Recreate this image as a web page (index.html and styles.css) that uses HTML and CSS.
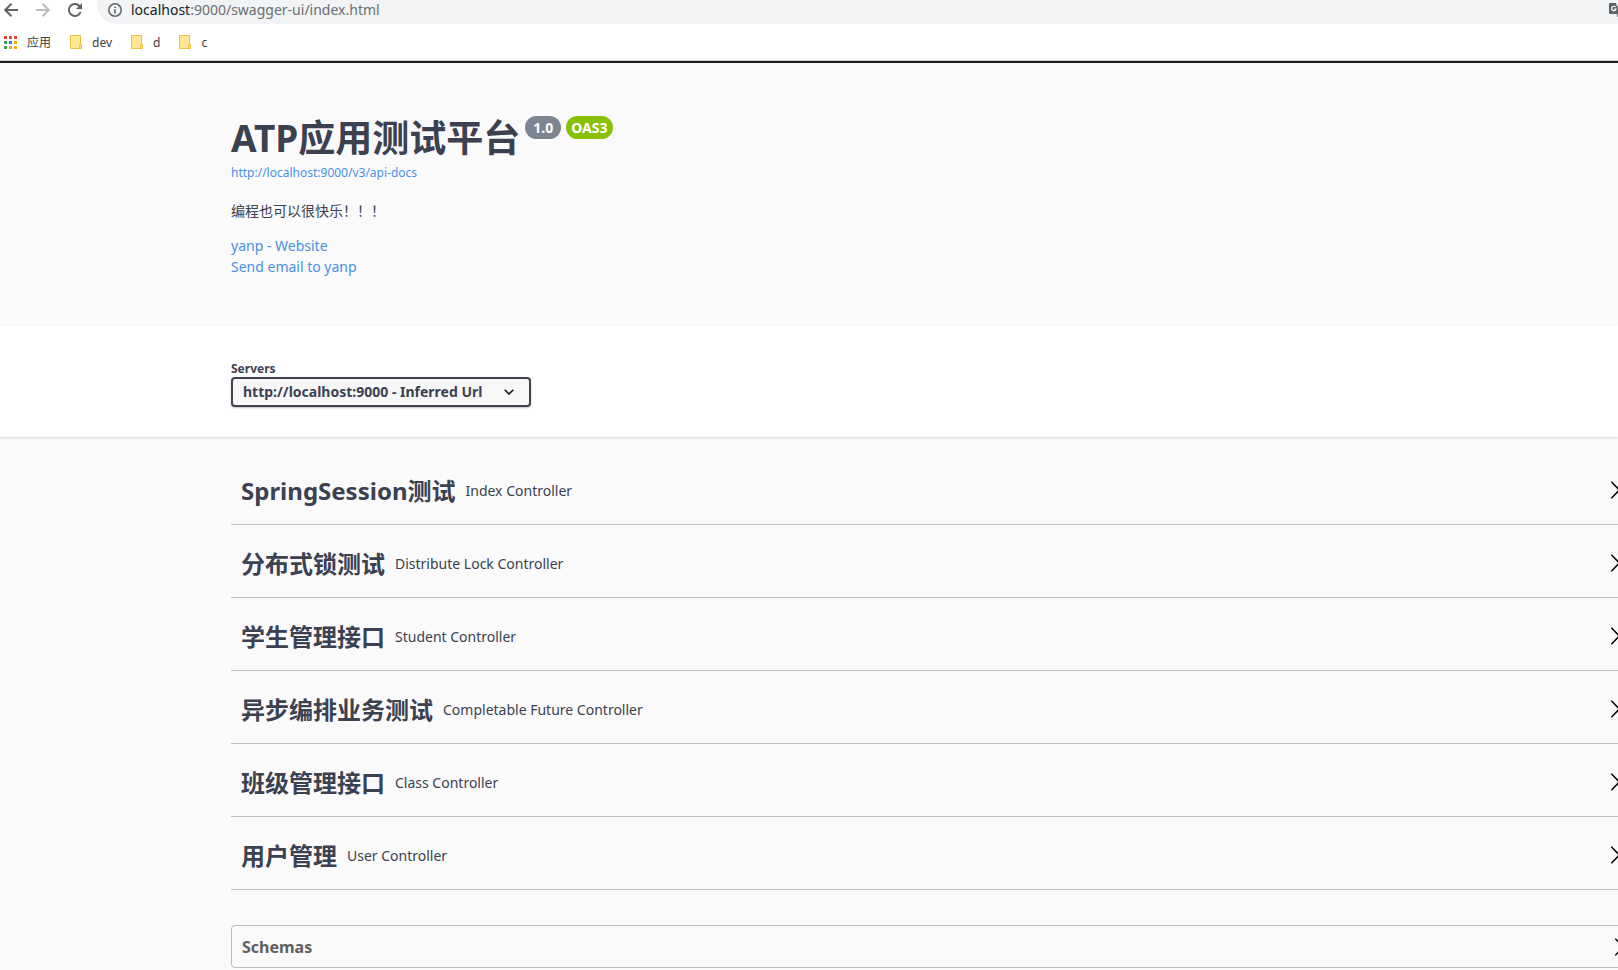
FILE: index.html
```html
<!DOCTYPE html>
<html lang="zh-CN">
<head>
  <meta charset="UTF-8">
  <meta name="viewport" content="width=device-width, initial-scale=1.0">
  <title>Swagger UI</title>
  <link rel="stylesheet" href="styles.css">
</head>
<body>
  <svg width="0" height="0" class="defs">
    <symbol id="large-arrow" viewBox="0 0 20 20">
      <path d="M13.25 10L6.109 2.58c-.268-.27-.268-.707 0-.979.268-.27.701-.27.969 0l7.83 7.908c.268.271.268.709 0 .979l-7.83 7.908c-.268.271-.701.27-.969 0-.268-.269-.268-.707 0-.979L13.25 10z"/>
    </symbol>
    <symbol id="folder" viewBox="0 0 12 14">
      <path d="M.5.5h10v9h1v4H.5z" fill="#ffe693" stroke="#e9c343"/>
      <path d="M9.5 13V9.500h2" fill="none" stroke="#e9c343"/>
    </symbol>
  </svg>

  <!-- Browser bar -->
  <header class="browser">
    <div class="toolbar">
      <button class="nav-btn" aria-label="Back">
        <svg width="14" height="14" viewBox="0 0 14 14"><path d="M14 7H1.500M7.500 .7L1.200 7l6.300 6.300" fill="none" stroke="#5f6368" stroke-width="2"/></svg>
      </button>
      <button class="nav-btn" aria-label="Forward">
        <svg width="14" height="14" viewBox="0 0 14 14"><path d="M0 7h12.500M6.500 .7L12.800 7l-6.300 6.300" fill="none" stroke="#bbbdbf" stroke-width="2"/></svg>
      </button>
      <button class="nav-btn" aria-label="Reload">
        <svg width="14" height="14" viewBox="0 0 14 14"><path d="M12.600 9A6 6 0 1 1 11.400 2.900L13 4.500" fill="none" stroke="#5f6368" stroke-width="2"/><path d="M14 0v6H8z" fill="#5f6368"/></svg>
      </button>
      <div class="address">
        <svg width="14" height="14" viewBox="0 0 14 14"><circle cx="7" cy="7" r="6.200" fill="none" stroke="#5f6368" stroke-width="1.500"/><path d="M6.200 3.500h1.600v1.600H6.200zM6.200 6.200h1.600v4.300H6.200z" fill="#5f6368"/></svg>
        <span class="url"><b>localhost</b>:9000/swagger-ui/index.html</span>
        <svg class="translate" width="16" height="14" viewBox="0 0 16 14"><path d="M7 3h9v11H8z" fill="#8a8d91"/><path d="M1 0h6l3 11H1a1 1 0 0 1-1-1V1a1 1 0 0 1 1-1z" fill="#5f6368"/><path d="M6.500 4A2.200 2.200 0 1 0 7 6H5" fill="none" stroke="#fff" stroke-width="1.200"/><path d="M9 5h6M12 4v1M14 5c-1 3-2 4-4 5" fill="none" stroke="#fff"/></svg>
      </div>
    </div>
    <nav class="bookmarks">
      <a href="#">
        <svg width="13" height="13" viewBox="0 0 13 13">
          <path d="M0 0h3v3H0zM5 0h3v3H5zM10 0h3v3h-3z" fill="#ea4335"/>
          <path d="M0 5h3v3H0zM0 10h3v3H0z" fill="#34a05a"/>
          <path d="M5 5h3v3H5z" fill="#1a82f7"/>
          <path d="M10 5h3v3h-3zM5 10h3v3H5zM10 10h3v3h-3z" fill="#f9ab00"/>
        </svg>
        应用
      </a>
      <a href="#"><svg width="12" height="14"><use href="#folder"/></svg>dev</a>
      <a href="#"><svg width="12" height="14"><use href="#folder"/></svg>d</a>
      <a href="#"><svg width="12" height="14"><use href="#folder"/></svg>c</a>
    </nav>
  </header>

  <main class="swagger-ui">
    <section class="info wrapper">
      <h1 class="title">ATP应用测试平台
        <span class="badges"><small class="version">1.0</small><small class="version oas">OAS3</small></span>
      </h1>
      <a class="docs-link" href="#">http://localhost:9000/v3/api-docs</a>
      <p class="description">编程也可以很快乐！！！</p>
      <div class="contact">
        <a href="#">yanp - Website</a>
        <a href="#">Send email to yanp</a>
      </div>
    </section>

    <section class="scheme-container">
      <div class="wrapper">
        <label for="servers">Servers</label>
        <div class="select-box">
          <select id="servers">
            <option>http://localhost:9000 - Inferred Url</option>
          </select>
          <svg width="10" height="6" viewBox="0 0 10 6"><path d="M.7.7L5 5 9.300.7" fill="none" stroke="#111" stroke-width="1.600"/></svg>
        </div>
      </div>
    </section>

    <section class="wrapper wide">
      <div class="tag">
        <h3>SpringSession测试</h3><small>Index Controller</small>
        <button aria-label="Expand"><svg width="20" height="20"><use href="#large-arrow"/></svg></button>
      </div>
      <div class="tag">
        <h3>分布式锁测试</h3><small>Distribute Lock Controller</small>
        <button aria-label="Expand"><svg width="20" height="20"><use href="#large-arrow"/></svg></button>
      </div>
      <div class="tag">
        <h3>学生管理接口</h3><small>Student Controller</small>
        <button aria-label="Expand"><svg width="20" height="20"><use href="#large-arrow"/></svg></button>
      </div>
      <div class="tag">
        <h3>异步编排业务测试</h3><small>Completable Future Controller</small>
        <button aria-label="Expand"><svg width="20" height="20"><use href="#large-arrow"/></svg></button>
      </div>
      <div class="tag">
        <h3>班级管理接口</h3><small>Class Controller</small>
        <button aria-label="Expand"><svg width="20" height="20"><use href="#large-arrow"/></svg></button>
      </div>
      <div class="tag">
        <h3>用户管理</h3><small>User Controller</small>
        <button aria-label="Expand"><svg width="20" height="20"><use href="#large-arrow"/></svg></button>
      </div>

      <div class="models">
        <h4>Schemas</h4>
        <button aria-label="Expand schemas"><svg width="20" height="20"><use href="#large-arrow"/></svg></button>
      </div>
    </section>
  </main>
</body>
</html>
```

FILE: styles.css
```css
* {
  box-sizing: border-box;
}
body {
  margin: 0;
  background: #fafafa;
  color: #3b4151;
  font-family: "Noto Sans", "Noto Sans CJK SC", sans-serif;
  font-size: 14px;
  overflow-x: hidden;
}
.defs {
  position: absolute;
}
h1, h3, h4, p {
  margin: 0;
}
a {
  color: #4990e2;
  text-decoration: none;
}
button {
  padding: 0;
  border: none;
  background: none;
  cursor: pointer;
}
svg {
  display: block;
  flex: none;
}

/* browser bar */
.browser {
  background: #fff;
  border-bottom: 1px solid #d0d0d0;
}
.toolbar {
  display: flex;
  height: 24px;
  padding-left: 4px;
}
.nav-btn {
  width: 32px;
  padding-bottom: 4px;
}
.address {
  flex: 1;
  display: flex;
  align-items: center;
  gap: 9px;
  padding: 0 0 4px 11px;
  margin-left: -3px;
  background: #f1f3f4;
  border-radius: 0 0 0 20px;
  overflow: hidden;
}
.url {
  flex: 1;
  font-size: 14px;
  line-height: 20px;
  color: #6b6f73;
}
.url b {
  font-weight: normal;
  color: #202124;
}
.translate {
  margin-right: -7px;
}
.bookmarks {
  display: flex;
  gap: 19px;
  height: 36px;
  padding-left: 4px;
}
.bookmarks a {
  display: flex;
  align-items: center;
  gap: 10px;
  color: #3c4043;
  font-size: 12px;
}

/* swagger */
.swagger-ui {
  border-top: 2px solid #1b1b1b;
}
.wrapper {
  padding-left: 231px;
}
.info {
  height: 263px;
  padding-top: 50px;
}
.title {
  display: flex;
  gap: 5px;
  font-size: 37px;
  line-height: 50px;
}
.badges {
  display: flex;
  gap: 5px;
  padding-top: 3px;
}
.version {
  height: 23px;
  padding: 0 8px;
  border-radius: 12px;
  background: #7d8492;
  color: #fff;
  font-size: 14px;
  line-height: 23px;
}
.version.oas {
  padding: 0 5px;
  background: #89bf04;
}
.docs-link {
  display: block;
  font-size: 12px;
  line-height: 20px;
}
.description {
  margin: 18px 0 14px;
  line-height: 20px;
}
.contact a {
  display: block;
  line-height: 21px;
}
.scheme-container {
  padding: 35px 0 30px;
  background: #fff;
  box-shadow: 0 1px 2px rgba(0, 0, 0, .15);
}
.scheme-container label {
  display: block;
  font-size: 12px;
  font-weight: bold;
  line-height: 16px;
}
.select-box {
  display: grid;
  width: 300px;
  align-items: center;
}
.select-box select,
.select-box svg {
  grid-area: 1 / 1;
}
.select-box select {
  height: 30px;
  padding: 0 10px 1px;
  border: 2px solid #41444e;
  border-radius: 4px;
  background: #f7f7f7;
  box-shadow: 0 1px 2px rgba(0, 0, 0, .25);
  color: #3b4151;
  font-family: inherit;
  font-size: 14px;
  font-weight: bold;
  appearance: none;
}
.select-box svg {
  justify-self: end;
  margin-right: 17px;
  pointer-events: none;
}
.wide {
  padding-top: 15px;
  overflow: hidden;
}
.tag {
  display: flex;
  align-items: center;
  gap: 10px;
  height: 73px;
  padding: 4px 0 0 10px;
  border-bottom: 1px solid #c0c1c5;
}
.tag h3 {
  padding-top: 2px;
  font-size: 24px;
  line-height: 32px;
}
.tag small {
  flex: 1;
  font-size: 14px;
}
.tag button {
  margin-right: -7px;
}
.models {
  display: flex;
  align-items: center;
  justify-content: space-between;
  height: 43px;
  margin: 35px -20px 2px 0;
  padding: 0 8px 0 10px;
  border: 1px solid #bcbcbd;
  border-radius: 4px;
}
.models h4 {
  font-size: 16px;
  color: #606060;
}
```
